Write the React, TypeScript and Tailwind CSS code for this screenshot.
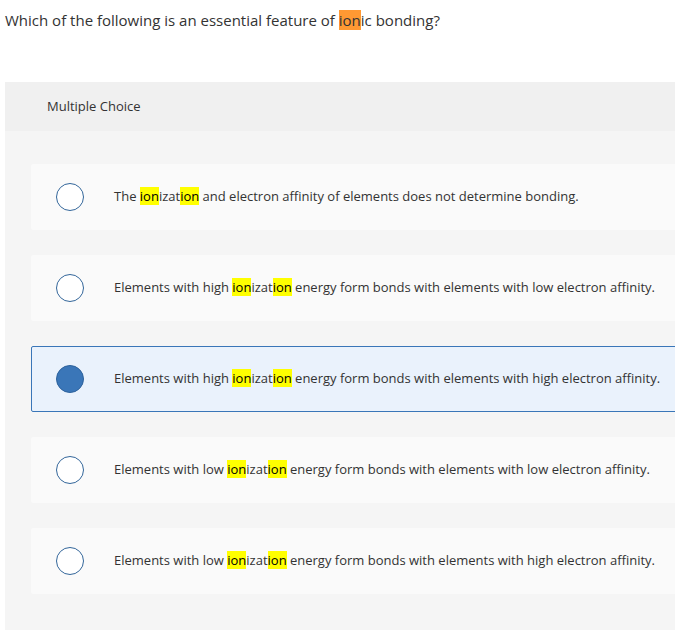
import React from "react";

type Option = { parts: string[]; selected?: boolean };

// every odd index in parts is a highlighted "ion"
const options: Option[] = [
  { parts: ["The ", "ion", "izat", "ion", " and electron affinity of elements does not determine bonding."] },
  { parts: ["Elements with high ", "ion", "izat", "ion", " energy form bonds with elements with low electron affinity."] },
  { parts: ["Elements with high ", "ion", "izat", "ion", " energy form bonds with elements with high electron affinity."], selected: true },
  { parts: ["Elements with low ", "ion", "izat", "ion", " energy form bonds with elements with low electron affinity."] },
  { parts: ["Elements with low ", "ion", "izat", "ion", " energy form bonds with elements with high electron affinity."] },
];

function Radio({ checked }: { checked?: boolean }) {
  return checked ? (
    <div className="w-[28px] h-[28px] rounded-full bg-[#3a76b8] border-[1.5px] border-[#2d629c] flex-shrink-0" />
  ) : (
    <div className="w-[28px] h-[28px] rounded-full bg-white border-[1.5px] border-[#33669a] flex-shrink-0" />
  );
}

export default function App() {
  return (
    <div
      className="w-[675px] h-[630px] overflow-hidden bg-white text-[#333]"
      style={{ fontFamily: '"Open Sans", "Liberation Sans", sans-serif' }}
    >
      <div className="pl-[5px] pt-[10px] text-[15px] leading-[20px]">
        Which of the following is an essential feature of{" "}
        <span className="bg-[#ff9933]">ion</span>ic bonding?
      </div>

      <div className="ml-[5px] mt-[52px] w-[720px]">
        <div className="bg-[#f0f0f0] h-[49px] flex items-center pl-[42px] text-[13px]">
          Multiple Choice
        </div>
        <div className="bg-[#f5f5f5] pt-[33px] pl-[26px] pb-[40px] flex flex-col gap-[25px]">
          {options.map((o, i) => (
            <div
              key={i}
              className={
                o.selected
                  ? "h-[66px] flex items-center pl-[24px] gap-[30px] bg-[#eaf2fc] border border-[#3a76b8] rounded-[2px]"
                  : "h-[66px] flex items-center pl-[25px] gap-[30px] bg-[#fafafa] rounded-[2px]"
              }
            >
              <Radio checked={o.selected} />
              <div className="text-[13px] whitespace-nowrap">
                {o.parts.map((p, j) =>
                  j % 2 === 1 ? (
                    <span key={j} className="bg-[#ffff00] text-black">
                      {p}
                    </span>
                  ) : (
                    <span key={j}>{p}</span>
                  )
                )}
              </div>
            </div>
          ))}
        </div>
      </div>
    </div>
  );
}
